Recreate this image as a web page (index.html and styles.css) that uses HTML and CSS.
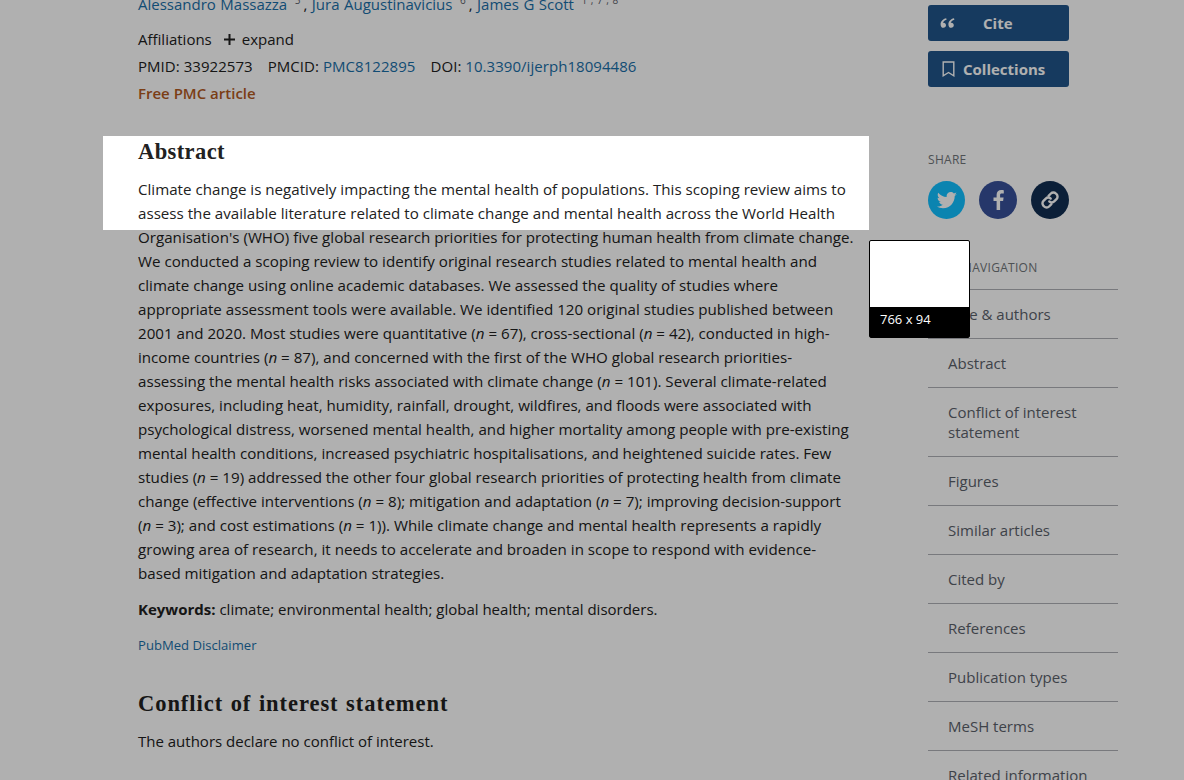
FILE: index.html
```html
<!DOCTYPE html>
<html lang="en">
<head>
    <meta charset="UTF-8">
    <title>Climate change and mental health</title>
    <link rel="stylesheet" href="styles.css">
</head>
<body>
    <div class="page">
        <main class="article">
            <div class="authors">
                <a href="#">Alessandro Massazza</a> <sup>5</sup>, <a href="#">Jura Augustinavicius</a> <sup>6</sup>, <a href="#">James G Scott</a> <sup>1 , 7 , 8</sup>
            </div>
            <div class="affiliations">
                <span>Affiliations</span>
                <svg class="plus" width="13" height="13" viewBox="0 0 13 13"><path fill="none" stroke="currentColor" stroke-width="2" d="M6.500 1v11M1 6.500h11"/></svg>
                <span>expand</span>
            </div>
            <div class="ids">
                <span>PMID: 33922573</span>
                <span>PMCID: <a href="#">PMC8122895</a></span>
                <span>DOI: <a href="#">10.3390/ijerph18094486</a></span>
            </div>
            <div class="free-article">Free PMC article</div>

            <h2 class="abstract-title">Abstract</h2>
            <p class="abstract">Climate change is negatively impacting the mental health of populations. This scoping review aims to<br>
assess the available literature related to climate change and mental health across the World Health<br>
Organisation's (WHO) five global research priorities for protecting human health from climate change.<br>
We conducted a scoping review to identify original research studies related to mental health and<br>
climate change using online academic databases. We assessed the quality of studies where<br>
appropriate assessment tools were available. We identified 120 original studies published between<br>
2001 and 2020. Most studies were quantitative (<em>n</em> = 67), cross-sectional (<em>n</em> = 42), conducted in high-<br>
income countries (<em>n</em> = 87), and concerned with the first of the WHO global research priorities-<br>
assessing the mental health risks associated with climate change (<em>n</em> = 101). Several climate-related<br>
exposures, including heat, humidity, rainfall, drought, wildfires, and floods were associated with<br>
psychological distress, worsened mental health, and higher mortality among people with pre-existing<br>
mental health conditions, increased psychiatric hospitalisations, and heightened suicide rates. Few<br>
studies (<em>n</em> = 19) addressed the other four global research priorities of protecting health from climate<br>
change (effective interventions (<em>n</em> = 8); mitigation and adaptation (<em>n</em> = 7); improving decision-support<br>
(<em>n</em> = 3); and cost estimations (<em>n</em> = 1)). While climate change and mental health represents a rapidly<br>
growing area of research, it needs to accelerate and broaden in scope to respond with evidence-<br>
based mitigation and adaptation strategies.</p>
            <p class="keywords"><strong>Keywords:</strong> climate; environmental health; global health; mental disorders.</p>
            <a class="disclaimer" href="#">PubMed Disclaimer</a>

            <h2 class="conflict-title">Conflict of interest statement</h2>
            <p class="conflict">The authors declare no conflict of interest.</p>
        </main>

        <aside class="sidebar">
            <a class="btn btn-cite" href="#">
                <svg class="btn-icon" width="15" height="12" viewBox="0 0 15 12"><path fill="currentColor" d="M6.200 1.200C3 2 .6 4.200.6 7.400c0 2 1.100 3.400 2.800 3.400 1.500 0 2.600-1 2.600-2.500S5 5.800 3.600 5.800c-.3 0-.5 0-.7.100.3-1.300 1.700-2.500 3.700-3.200zM14 1.200c-3.200.8-5.600 3-5.600 6.200 0 2 1.100 3.400 2.800 3.400 1.500 0 2.600-1 2.600-2.500s-1-2.500-2.400-2.500c-.3 0-.5 0-.7.100.3-1.300 1.700-2.500 3.700-3.200z"/></svg>
                <span>Cite</span>
            </a>
            <a class="btn btn-collections" href="#">
                <svg class="btn-icon" width="13" height="16" viewBox="0 0 13 16"><path fill="none" stroke="currentColor" stroke-width="1.400" d="M1.200 1h10.600v13.800l-5.300-3.300-5.300 3.300z"/></svg>
                <span>Collections</span>
            </a>

            <div class="side-label share-label">SHARE</div>
            <div class="share-row">
                <a class="share share-twitter" href="#">
                    <svg width="20" height="17" viewBox="0 0 20 17"><path fill="currentColor" d="M20 2c-.7.300-1.500.600-2.400.700.900-.500 1.500-1.300 1.800-2.300-.8.500-1.700.800-2.600 1C16 .5 14.900 0 13.700 0c-2.300 0-4.100 1.800-4.100 4.100 0 .3 0 .6.100.9C6.300 4.900 3.300 3.200 1.300.7.900 1.300.700 2.100.700 2.800c0 1.400.7 2.700 1.800 3.400-.7 0-1.300-.2-1.900-.5v.1c0 2 1.400 3.700 3.300 4-.3.100-.7.100-1.100.100-.3 0-.5 0-.8-.1.500 1.600 2 2.800 3.800 2.900-1.400 1.100-3.200 1.800-5.100 1.800-.3 0-.7 0-1-.1 1.800 1.200 4 1.900 6.300 1.900 7.500 0 11.700-6.300 11.700-11.700v-.5c.9-.6 1.600-1.300 2.300-2.100z"/></svg>
                </a>
                <a class="share share-facebook" href="#">
                    <svg width="11" height="20" viewBox="0 0 11 20"><path fill="currentColor" d="M7.100 20v-9h3l.5-3.600H7.100V5.200c0-1 .3-1.700 1.800-1.700h1.900V.3C10.500.2 9.400 0 8.200 0 5.500 0 3.600 1.700 3.600 4.700v2.700H.5V11h3.100v9z"/></svg>
                </a>
                <a class="share share-link" href="#">
                    <svg width="20" height="20" viewBox="0 0 20 20"><g fill="none" stroke="currentColor" stroke-width="2.400" stroke-linecap="round" transform="rotate(0 10 10)"><path d="M8.600 5.800l2.300-2.300a3.400 3.400 0 0 1 4.900 0l.7.700a3.400 3.400 0 0 1 0 4.900l-2.300 2.300a3.400 3.400 0 0 1-4.900 0"/><path d="M11.400 14.200l-2.300 2.300a3.400 3.400 0 0 1-4.900 0l-.7-.7a3.400 3.400 0 0 1 0-4.900l2.300-2.300a3.400 3.400 0 0 1 4.900 0"/></g></svg>
                </a>
            </div>

            <div class="side-label nav-label">PAGE NAVIGATION</div>
            <ul class="page-nav">
                <li><a href="#">Title &amp; authors</a></li>
                <li><a href="#">Abstract</a></li>
                <li><a href="#">Conflict of interest statement</a></li>
                <li><a href="#">Figures</a></li>
                <li><a href="#">Similar articles</a></li>
                <li><a href="#">Cited by</a></li>
                <li><a href="#">References</a></li>
                <li><a href="#">Publication types</a></li>
                <li><a href="#">MeSH terms</a></li>
                <li><a href="#">Related information</a></li>
            </ul>
        </aside>
    </div>

    <!-- lit region of the capture; its shadow dims the rest of the page -->
    <div class="capture-area"></div>
    <div class="capture-size">
        <div class="capture-label">766 x 94</div>
    </div>
</body>
</html>
```

FILE: styles.css
```css
html, body {
    height: 100%;
    overflow: hidden;
}
body {
    margin: 0;
    background-color: white;
    font-family: "Open Sans", sans-serif;
    font-size: 15px;
    line-height: 24px;
    color: #212121;
}
a {
    color: #1a6fa8;
    text-decoration: none;
}
.page {
    display: grid;
    grid-template-columns: 722px 190px;
    column-gap: 68px;
    padding-left: 138px;
    margin-top: -7px;
}

/* Article column */
.authors {
    height: 24px;
    margin-top: -1px;
    word-spacing: 0.6px;
}
.authors sup {
    font-size: 10px;
    line-height: 0;
    margin: 0 3px;
    word-spacing: 1px;
    color: #5b616b;
}
.affiliations {
    margin-top: 11px;
    display: flex;
    align-items: center;
}
.plus {
    margin: 1px 6px 0 11px;
}
.ids {
    margin-top: 3px;
    display: flex;
    gap: 15px;
    letter-spacing: 0.05px;
}
.free-article {
    margin-top: 3px;
    font-weight: 600;
    color: #b35a1f;
}
.abstract-title, .conflict-title {
    font-family: "Liberation Serif", serif;
    font-weight: bold;
    font-size: 22.5px;
    line-height: 30px;
    margin: 0;
    letter-spacing: 0.4px;
}
.abstract-title {
    margin-top: 32px;
}
.abstract {
    margin: 10px 0 0;
    font-size: 15.15px;
    white-space: nowrap;
}
.keywords {
    margin: 12px 0 0;
}
.disclaimer {
    display: block;
    margin-top: 12px;
    font-size: 13.1px;
}
.conflict-title {
    margin-top: 32px;
    letter-spacing: 0.95px;
    word-spacing: 1px;
}
.conflict {
    margin: 10px 0 0;
}

/* Sidebar */
.sidebar {
    padding-top: 12px;
}
.btn {
    display: flex;
    align-items: center;
    width: 141px;
    height: 36px;
    box-sizing: border-box;
    border-radius: 3px;
    background-color: #20558a;
    color: white;
    font-weight: 700;
    margin-bottom: 10px;
}
.btn-cite {
    padding-left: 12px;
    gap: 28px;
}
.btn-collections {
    padding-left: 14px;
    gap: 8px;
}
.side-label {
    font-size: 12px;
    line-height: 16px;
    letter-spacing: 0.3px;
    color: #71767a;
}
.share-label {
    margin-top: 65px;
}
.share-row {
    display: flex;
    gap: 14px;
    margin-top: 13px;
}
.share {
    width: 38px;
    height: 38px;
    border-radius: 50%;
    display: flex;
    align-items: center;
    justify-content: center;
    color: white;
}
.share-twitter {
    width: 37px;
    background-color: #11bfff;
}
.share-facebook {
    background-color: #37509a;
}
.share-link {
    background-color: #112e51;
}
.nav-label {
    margin-top: 41px;
}
.page-nav {
    list-style-type: none;
    margin: 13px 0 0;
    padding: 0;
}
.page-nav li {
    border-top: 1px solid #aeb0b5;
    padding: 14px 0 14px 20px;
    line-height: 20px;
}
.page-nav a {
    color: #5b616b;
    display: block;
}

/* Screenshot selection overlay */
.capture-area {
    position: absolute;
    left: 103px;
    top: 136px;
    width: 766px;
    height: 94px;
    box-shadow: 0 0 0 1400px rgba(0, 0, 0, 0.31);
}
.capture-size {
    position: absolute;
    left: 869px;
    top: 240px;
    width: 101px;
    height: 98px;
    box-sizing: border-box;
    border: 1px solid black;
    border-radius: 2px;
    background-color: white;
    display: flex;
    flex-direction: column;
    justify-content: flex-end;
}
.capture-label {
    height: 30px;
    background-color: black;
    color: white;
    font-size: 13px;
    line-height: 25px;
    padding-left: 10px;
}
```
